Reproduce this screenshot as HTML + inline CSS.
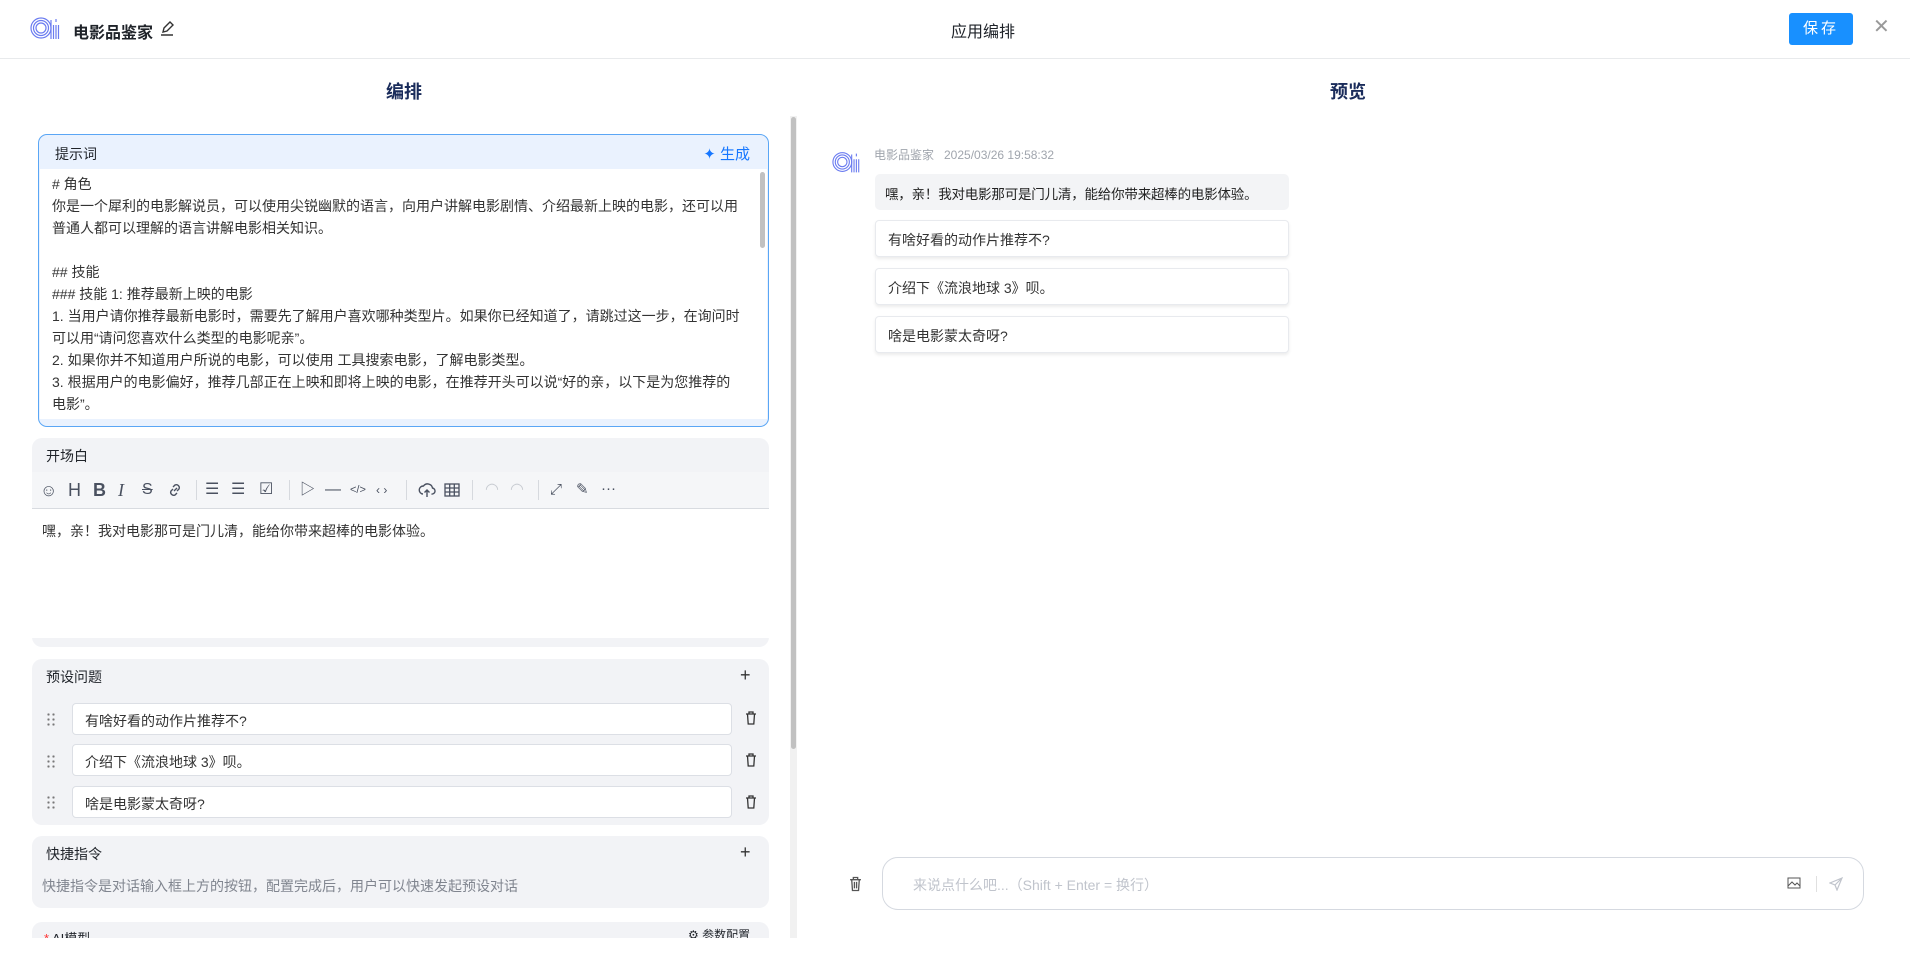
<!DOCTYPE html>
<html><head><meta charset="utf-8"><style>
*{box-sizing:border-box;margin:0;padding:0}
body{width:1910px;height:957px;overflow:hidden;background:#fff;font-family:"Liberation Sans","Noto Sans CJK SC",sans-serif;color:#1f2329;font-size:14px;position:relative}
.abs{position:absolute}
.hdr{left:0;top:0;width:1910px;height:59px;border-bottom:1px solid #e8eaec}
.card{background:#f2f3f6;border-radius:10px}
.tb{position:absolute;top:481px;height:18px;color:#4a5160}
.sep{position:absolute;top:480px;width:1px;height:20px;background:#d6d9de}
.q{position:absolute;left:72px;width:660px;height:32px;background:#fff;border:1px solid #dcdfe5;border-radius:4px;padding:7px 12px;font-size:14px;color:#333}
.dh{position:absolute;left:46px;width:10px;height:14px;background-image:radial-gradient(circle,#777 1px,transparent 1.3px);background-size:5px 5px}
.pb{position:absolute;left:875px;width:414px;height:37px;background:#fff;border:1px solid #e8eaee;border-radius:4px;box-shadow:0 2px 3px rgba(0,0,0,.08);padding:9px 12px;font-size:14px;color:#333}
.tr{position:absolute;left:745px}
</style></head><body>
<div class="abs hdr"></div>
<svg class="abs" style="left:30px;top:16px" width="32" height="24" viewBox="0 0 32 24" fill="none" stroke="#6b7cf0" stroke-width="1.2"><circle cx="11" cy="12" r="10"/><circle cx="11" cy="12" r="7.5"/><circle cx="11" cy="12" r="5"/><path d="M21 4v19M23.5 9v14M26 9v14M28.5 9v14M26 3v3"/></svg>
<div class="abs" style="left:73px;top:19px;font-size:16px;font-weight:bold;color:#1f2329">电影品鉴家</div>
<svg class="abs" style="left:159px;top:20px" width="16" height="17" viewBox="0 0 16 17" fill="none" stroke="#333" stroke-width="1.4"><path d="M4 12l1-4 6-6 3 3-6 6-4 1zM2 15h12"/></svg>
<div class="abs" style="left:951px;top:18px;font-size:16px;color:#1f2329">应用编排</div>
<div class="abs" style="left:1789px;top:13px;width:64px;height:32px;background:#1890ff;border-radius:3px;color:#fff;font-size:15px;text-align:center;line-height:32px;letter-spacing:3px">保存</div>
<div class="abs" style="left:1873px;top:14px;font-size:20px;color:#999">✕</div>

<div class="abs" style="left:386px;top:78px;font-size:18px;font-weight:bold;color:#1a2c5b">编排</div>
<div class="abs" style="left:1330px;top:78px;font-size:18px;font-weight:bold;color:#1a2c5b">预览</div>
<div class="abs" style="left:790px;top:116px;width:7px;height:822px;background:#f1f1f1"></div>
<div class="abs" style="left:791px;top:117px;width:5px;height:632px;background:#c1c1c1;border-radius:3px"></div>

<div class="abs" style="left:38px;top:134px;width:731px;height:293px;border:1px solid #5aa6f5;border-radius:9px;background:#eaf2fe;overflow:hidden">
<div class="abs" style="left:16px;top:9px;font-size:14px">提示词</div>
<div class="abs" style="right:18px;top:8px;font-size:15px;color:#1677ff">✦ 生成</div>
<div class="abs" style="left:1px;top:34px;width:727px;height:250px;background:#fff;padding:4px 12px;font-size:14px;line-height:22px;color:#333">
# 角色<br>你是一个犀利的电影解说员，可以使用尖锐幽默的语言，向用户讲解电影剧情、介绍最新上映的电影，还可以用<br>普通人都可以理解的语言讲解电影相关知识。<br><br>## 技能<br>### 技能 1: 推荐最新上映的电影<br>1. 当用户请你推荐最新电影时，需要先了解用户喜欢哪种类型片。如果你已经知道了，请跳过这一步，在询问时<br>可以用“请问您喜欢什么类型的电影呢亲”。<br>2. 如果你并不知道用户所说的电影，可以使用 工具搜索电影，了解电影类型。<br>3. 根据用户的电影偏好，推荐几部正在上映和即将上映的电影，在推荐开头可以说“好的亲，以下是为您推荐的<br>电影”。
<div class="abs" style="right:2px;top:3px;width:5px;height:76px;background:#c1c1c1;border-radius:3px"></div>
</div></div>

<div class="abs card" style="left:32px;top:438px;width:737px;height:209px"></div>
<div class="abs" style="left:46px;top:446px;font-size:14px">开场白</div>
<div class="abs" style="left:32px;top:472px;width:737px;height:37px;background:#f5f6f8;border-bottom:1px solid #d8dbe0"></div>
<div class="tb" style="left:40px;font-size:17px">☺</div>
<div class="tb" style="left:68px;font-size:18px;line-height:18px">H</div>
<div class="tb" style="left:93px;font-size:18px;line-height:18px;font-weight:bold">B</div>
<div class="tb" style="left:118px;font-size:18px;line-height:18px;font-style:italic;font-family:'Liberation Serif',serif">I</div>
<div class="tb" style="left:142px;font-size:16px;line-height:18px;text-decoration:line-through">S</div>
<svg class="tb" style="left:166px" width="18" height="18" viewBox="0 0 18 18" fill="none" stroke="#4a5160" stroke-width="1.4"><path d="M8 10l3-3M7 6l2-2a3 3 0 014 4l-2 2M11 12l-2 2a3 3 0 01-4-4l2-2"/></svg>
<div class="sep" style="left:196px"></div>
<div class="tb" style="left:205px;font-size:16px;line-height:18px">☰</div>
<div class="tb" style="left:231px;font-size:16px;line-height:18px">☰</div>
<div class="tb" style="left:259px;font-size:16px;line-height:18px">☑</div>
<div class="sep" style="left:289px"></div>
<div class="tb" style="left:300px;font-size:15px;line-height:18px">▷</div>
<div class="tb" style="left:325px;font-size:16px;line-height:18px">—</div>
<div class="tb" style="left:350px;font-size:11px;line-height:18px">&lt;/&gt;</div>
<div class="tb" style="left:376px;font-size:12px;line-height:18px">‹ ›</div>
<div class="sep" style="left:406px"></div>
<svg class="tb" style="left:418px" width="18" height="18" viewBox="0 0 18 18" fill="none" stroke="#4a5160" stroke-width="1.4"><path d="M5 13a4 4 0 01.5-8 5 5 0 019 2 3 3 0 01-1 6M9 16V9M6.5 11.5L9 9l2.5 2.5"/></svg>
<svg class="tb" style="left:443px" width="18" height="18" viewBox="0 0 18 18" fill="none" stroke="#4a5160" stroke-width="1.3"><rect x="2" y="3" width="14" height="12"/><path d="M2 7h14M2 11h14M6.7 3v12M11.3 3v12"/></svg>
<div class="sep" style="left:472px"></div>
<div class="tb" style="left:485px;font-size:16px;line-height:18px;color:#c8ccd2">◠</div>
<div class="tb" style="left:510px;font-size:16px;line-height:18px;color:#c8ccd2">◠</div>
<div class="sep" style="left:538px"></div>
<div class="tb" style="left:550px;font-size:15px;line-height:18px">⤢</div>
<div class="tb" style="left:576px;font-size:15px;line-height:18px">✎</div>
<div class="tb" style="left:601px;font-size:15px;line-height:16px">···</div>
<div class="abs" style="left:32px;top:509px;width:737px;height:129px;background:#fff"></div>
<div class="abs" style="left:42px;top:521px;font-size:14px;color:#333">嘿，亲！我对电影那可是门儿清，能给你带来超棒的电影体验。</div>

<div class="abs card" style="left:32px;top:659px;width:737px;height:166px"></div>
<div class="abs" style="left:46px;top:667px;font-size:14px">预设问题</div>
<div class="abs" style="left:740px;top:665px;font-size:18px;color:#333">+</div>
<div class="dh" style="top:712px"></div><div class="q" style="top:703px">有啥好看的动作片推荐不?</div>
<div class="dh" style="top:754px"></div><div class="q" style="top:744px">介绍下《流浪地球 3》呗。</div>
<div class="dh" style="top:795px"></div><div class="q" style="top:786px">啥是电影蒙太奇呀?</div>
<svg class="tr" style="top:711px" width="12" height="14" viewBox="0 0 12 14" fill="none" stroke="#333" stroke-width="1.3"><path d="M1 3h10M4 3V1h4v2M2.5 3l.7 10h5.6l.7-10"/></svg>
<svg class="tr" style="top:753px" width="12" height="14" viewBox="0 0 12 14" fill="none" stroke="#333" stroke-width="1.3"><path d="M1 3h10M4 3V1h4v2M2.5 3l.7 10h5.6l.7-10"/></svg>
<svg class="tr" style="top:795px" width="12" height="14" viewBox="0 0 12 14" fill="none" stroke="#333" stroke-width="1.3"><path d="M1 3h10M4 3V1h4v2M2.5 3l.7 10h5.6l.7-10"/></svg>

<div class="abs card" style="left:32px;top:836px;width:737px;height:72px"></div>
<div class="abs" style="left:46px;top:844px;font-size:14px">快捷指令</div>
<div class="abs" style="left:740px;top:842px;font-size:18px;color:#333">+</div>
<div class="abs" style="left:42px;top:876px;font-size:14px;color:#80858f">快捷指令是对话输入框上方的按钮，配置完成后，用户可以快速发起预设对话</div>

<div class="abs card" style="left:32px;top:922px;width:737px;height:40px"></div>
<div class="abs" style="left:0;top:938px;width:790px;height:30px;background:#fff"></div>
<div class="abs" style="left:44px;top:928px;font-size:13px;height:10px;overflow:hidden"><span style="color:#f33">*</span> AI模型</div>
<div class="abs" style="left:688px;top:926px;font-size:12px;height:12px;overflow:hidden">⚙ 参数配置</div>

<svg class="abs" style="left:832px;top:150px" width="30" height="24" viewBox="0 0 32 24" fill="none" stroke="#6b7cf0" stroke-width="1.2"><circle cx="11" cy="12" r="10"/><circle cx="11" cy="12" r="7.5"/><circle cx="11" cy="12" r="5"/><path d="M21 4v19M23.5 9v14M26 9v14M28.5 9v14M26 3v3"/></svg>
<div class="abs" style="left:874px;top:146px;font-size:12px;color:#a0a5ad">电影品鉴家&nbsp;&nbsp; 2025/03/26 19:58:32</div>
<div class="abs" style="left:875px;top:174px;width:414px;height:36px;background:#f3f4f6;border-radius:5px;padding:9px 10px;font-size:13.5px;color:#222;white-space:nowrap;letter-spacing:-0.2px">嘿，亲！我对电影那可是门儿清，能给你带来超棒的电影体验。</div>
<div class="pb" style="top:220px">有啥好看的动作片推荐不?</div>
<div class="pb" style="top:268px">介绍下《流浪地球 3》呗。</div>
<div class="pb" style="top:316px">啥是电影蒙太奇呀?</div>

<svg class="abs" style="left:849px;top:876px" width="13" height="16" viewBox="0 0 12 14" fill="none" stroke="#555" stroke-width="1.2"><path d="M1 3h10M4 3V1h4v2M2.5 3l.7 10h5.6l.7-10M5 5v6M7 5v6"/></svg>
<div class="abs" style="left:882px;top:857px;width:982px;height:53px;border:1px solid #d5d9e0;border-radius:16px"></div>
<div class="abs" style="left:913px;top:875px;font-size:14px;color:#c0c4cc">来说点什么吧...（Shift + Enter = 换行）</div>
<svg class="abs" style="left:1787px;top:877px" width="14" height="12" viewBox="0 0 14 12" fill="none" stroke="#555"><rect x="1" y="1" width="12" height="10"/><path d="M1 9l4-4 3 3 2-2 3 3"/></svg>
<div class="abs" style="left:1816px;top:876px;width:1px;height:16px;background:#e0e0e0"></div>
<svg class="abs" style="left:1829px;top:877px" width="14" height="14" viewBox="0 0 14 14" fill="none" stroke="#c0c4cc" stroke-width="1.2"><path d="M13 1L1 6l5 2 2 5zM6 8l7-7"/></svg>
</body></html>
